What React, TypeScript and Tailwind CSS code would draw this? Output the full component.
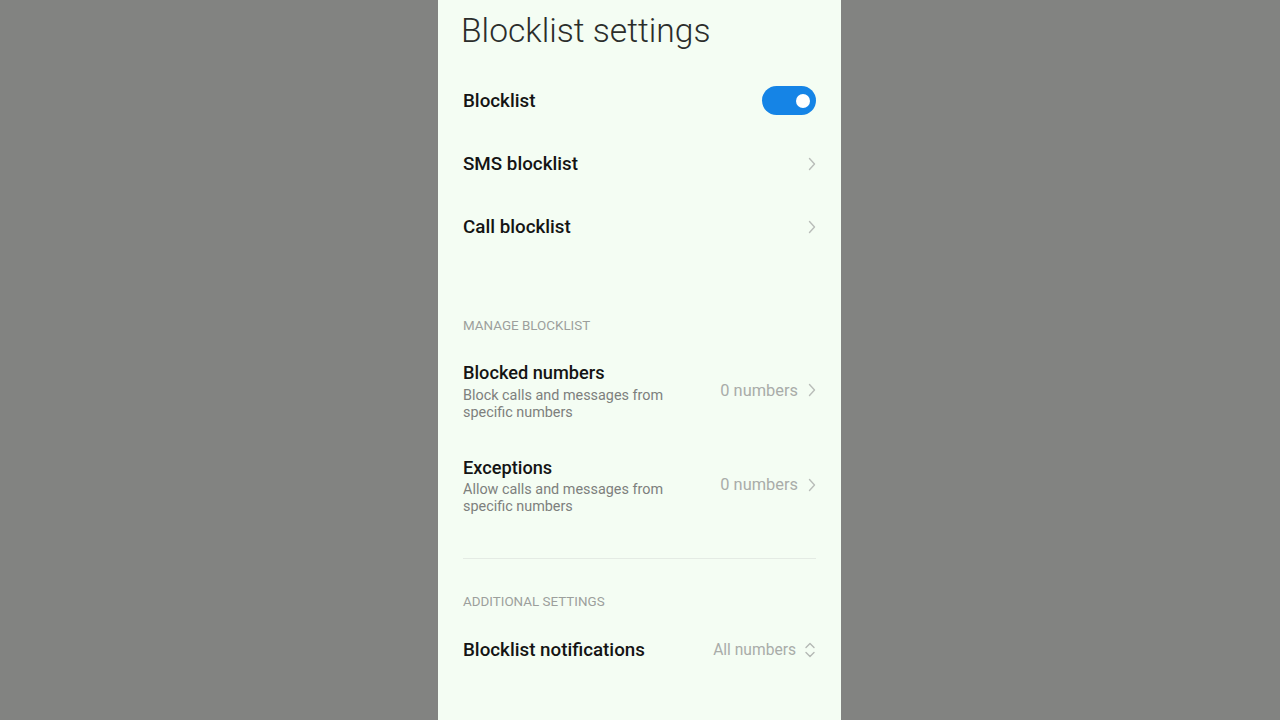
import type { ReactNode } from "react";

function Chevron() {
  return (
    <svg width="8" height="14" viewBox="0 0 8 14" className="-mt-[2px] shrink-0">
      <path d="M1.5 1.5 L6.5 7 L1.5 12.5" fill="none" stroke="#b9bdb9" strokeWidth="1.4" strokeLinecap="round" strokeLinejoin="round" />
    </svg>
  );
}

function UpDown() {
  return (
    <svg width="12" height="18" viewBox="0 0 12 18" className="shrink-0">
      <path d="M2 6.5 L6 2.5 L10 6.5" fill="none" stroke="#b4b8b4" strokeWidth="1.4" strokeLinecap="round" strokeLinejoin="round" />
      <path d="M2 11.5 L6 15.5 L10 11.5" fill="none" stroke="#b4b8b4" strokeWidth="1.4" strokeLinecap="round" strokeLinejoin="round" />
    </svg>
  );
}

function Toggle() {
  return (
    <div className="-mt-[2px] flex h-[29px] w-[54px] items-center justify-end rounded-full bg-[#1584e6] pr-[6px]">
      <div className="h-[14px] w-[14px] rounded-full bg-white" />
    </div>
  );
}

function Row({ label, right }: { label: string; right: ReactNode }) {
  return (
    <div className="flex h-[63px] items-center justify-between">
      <span className="text-[18.8px] font-medium text-[#141414]">{label}</span>
      {right}
    </div>
  );
}

function Header({ label, className }: { label: string; className: string }) {
  return (
    <div className={`text-[13.4px] leading-4 text-[#9c9f9c] ${className}`}>{label}</div>
  );
}

function Item({ title, sub }: { title: string; sub: string[] }) {
  return (
    <div className="flex items-center justify-between py-[18px]">
      <div className="flex flex-col">
        <span className="text-[18.2px] font-medium leading-[22px] text-[#141414]">{title}</span>
        <div className="mt-[2.5px] flex flex-col text-[14.4px] leading-[17px] text-[#7d807d]">
          {sub.map((line) => (
            <span key={line}>{line}</span>
          ))}
        </div>
      </div>
      <div className="flex items-center gap-[10px]">
        <span className="text-[16.4px] text-[#a9aca9]">0 numbers</span>
        <Chevron />
      </div>
    </div>
  );
}

export default function App() {
  return (
    <div className="flex h-[720px] w-[1280px] justify-center bg-[#828381] font-['Roboto',sans-serif]">
      <div className="mr-[1px] flex h-full w-[403px] flex-col bg-[#f4fdf3] px-[25px]">
        <div className="flex h-[70px] items-start pt-[7px]">
          <h1 className="-ml-[2px] text-[33.6px] font-light leading-[48px] text-[#2b2d2b]">Blocklist settings</h1>
        </div>
        <Row label="Blocklist" right={<Toggle />} />
        <Row label="SMS blocklist" right={<Chevron />} />
        <Row label="Call blocklist" right={<Chevron />} />

        <Header label="MANAGE BLOCKLIST" className="mt-[59px]" />
        <div className="mt-[10px]">
          <Item title="Blocked numbers" sub={["Block calls and messages from", "specific numbers"]} />
          <Item title="Exceptions" sub={["Allow calls and messages from", "specific numbers"]} />
        </div>

        <div className="mt-[25px] h-px bg-[#e4ebe4]" />

        <Header label="ADDITIONAL SETTINGS" className="mt-[35px]" />
        <div className="mt-[9px] flex h-[63px] items-center justify-between">
          <span className="text-[18.8px] font-medium text-[#141414]">Blocklist notifications</span>
          <div className="flex items-center gap-[8px]">
            <span className="text-[15.6px] text-[#a9aca9]">All numbers</span>
            <UpDown />
          </div>
        </div>
      </div>
    </div>
  );
}
